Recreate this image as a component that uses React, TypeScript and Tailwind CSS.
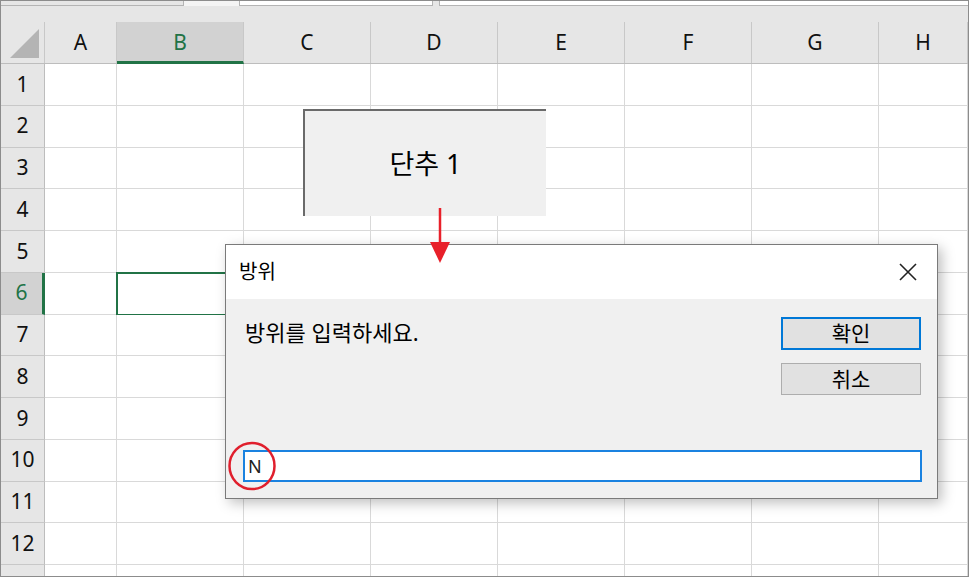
import React from "react"

const font = { fontFamily: '"Noto Sans", "Noto Sans CJK KR", sans-serif' }

const columns = [
  { name: "A", width: "w-[72px]" },
  { name: "B", width: "w-[127px]" },
  { name: "C", width: "w-[127px]" },
  { name: "D", width: "w-[127px]" },
  { name: "E", width: "w-[127px]" },
  { name: "F", width: "w-[127px]" },
  { name: "G", width: "w-[127px]" },
  { name: "H", width: "flex-1" },
]

const rows = [1, 2, 3, 4, 5, 6, 7, 8, 9, 10, 11, 12, 13]

function HeaderRow() {
  return (
    <div className="flex h-[42px] bg-[#e6e6e6] border-b border-[#bdbdbd]">
      <div className="w-[44px] shrink-0 border-r border-[#c8c8c8] relative">
        <svg className="absolute left-[9px] top-[7px]" width="30" height="30" viewBox="0 0 30 30">
          <polygon points="29,0 29,29 0,29" fill="#b4b4b4" />
        </svg>
      </div>
      {columns.map((c) => {
        const sel = c.name === "B"
        return (
          <div
            key={c.name}
            className={
              "shrink-0 flex items-center justify-center text-[21px] border-r " +
              c.width +
              (sel
                ? " bg-[#d2d2d2] text-[#217346] border-[#c8c8c8] border-b-[3px] border-b-[#217346] -mb-px pt-[2px]"
                : " text-[#111] border-[#c8c8c8]")
            }
          >
            {c.name}
          </div>
        )
      })}
    </div>
  )
}

function SheetRow({ n }: { n: number }) {
  const sel = n === 6
  return (
    <div className="flex h-[41.75px] shrink-0">
      <div
        className={
          "w-[44px] shrink-0 flex items-center justify-center text-[21px] border-b " +
          (sel
            ? "bg-[#d2d2d2] text-[#217346] border-[#c8c8c8] border-r-[3px] border-r-[#217346]"
            : "bg-[#e6e6e6] text-[#111] border-[#c8c8c8] border-r border-r-[#bdbdbd]")
        }
      >
        {n <= 12 ? n : ""}
      </div>
      {columns.map((c) => (
        <div
          key={c.name}
          className={"shrink-0 relative bg-white border-r border-b border-[#d9d9d9] " + c.width}
        >
          {sel && c.name === "B" && (
            <div className="absolute -left-px -top-px w-[129px] h-[43.75px] border-2 border-[#217346]" />
          )}
        </div>
      ))}
    </div>
  )
}

function Dialog() {
  return (
    <div className="absolute left-[224px] top-[243px] w-[713px] h-[255px] border border-[#7a7a7a] bg-[#f0f0f0] shadow-[4px_4px_12px_rgba(0,0,0,0.25)] flex flex-col">
      <div className="h-[54px] bg-white flex items-center justify-between pl-[13px] pr-[20px]">
        <span className="text-[20px] text-black">방위</span>
        <svg width="18" height="18" viewBox="0 0 18 18">
          <path d="M1 1 L17 17 M17 1 L1 17" stroke="#222" strokeWidth="1.6" fill="none" />
        </svg>
      </div>
      <div className="flex-1 flex flex-col px-[17px] pt-[18px]">
        <div className="flex justify-between">
          <span className="text-[22px] text-black pl-[2px] leading-[30px]">방위를 입력하세요.</span>
          <div className="flex flex-col gap-[13px] mr-[-1px]">
            <button className="w-[140px] h-[33px] bg-[#e1e1e1] border-2 border-[#0078d7] text-[21px] text-black leading-none">
              확인
            </button>
            <button className="w-[140px] h-[32px] bg-[#e1e1e1] border border-[#adadad] text-[21px] text-black leading-none">
              취소
            </button>
          </div>
        </div>
        <div className="mt-[55px] h-[32px] w-[679px] bg-white border-2 border-[#1a82e0] flex items-center pl-[3px] text-[18px] text-[#222]">
          N
        </div>
      </div>
    </div>
  )
}

export default function App() {
  return (
    <div
      style={font}
      className="relative w-[969px] h-[577px] overflow-hidden bg-white border border-[#8c8c8c]"
    >
      <div className="h-[21px] bg-[#e6e6e6] flex items-start">
        <div className="w-[183px] h-[5px] border-b border-r border-[#b4b4b4] bg-[#e6e6e6]" />
        <div className="w-[55px] h-[5px] bg-[#f4f4f4]" />
        <div className="w-[194px] h-[5px] border-b border-x border-[#b4b4b4] bg-white" />
        <div className="w-[6px]" />
        <div className="flex-1 h-[5px] border-b border-l border-[#b4b4b4] bg-white" />
      </div>
      <HeaderRow />
      {rows.map((n) => (
        <SheetRow key={n} n={n} />
      ))}

      <div className="absolute left-[302px] top-[108px] w-[243px] h-[107px] bg-[#f0f0f0] border-t-2 border-l-2 border-[#6a6a6a] flex items-center justify-center">
        <span className="text-[27px] text-black pt-[2px]">단추 1</span>
      </div>

      <Dialog />

      <svg className="absolute left-[428px] top-[207px]" width="22" height="56" viewBox="0 0 22 56">
        <line x1="11" y1="0" x2="11" y2="36" stroke="#e8202a" strokeWidth="2.5" />
        <polygon points="1,34 21,34 11,55" fill="#e8202a" />
      </svg>

      <svg className="absolute left-[226px] top-[439px]" width="50" height="52" viewBox="0 0 50 52">
        <ellipse cx="25" cy="26" rx="22.5" ry="23" stroke="#e01f2d" strokeWidth="2.5" fill="none" />
      </svg>
    </div>
  )
}
